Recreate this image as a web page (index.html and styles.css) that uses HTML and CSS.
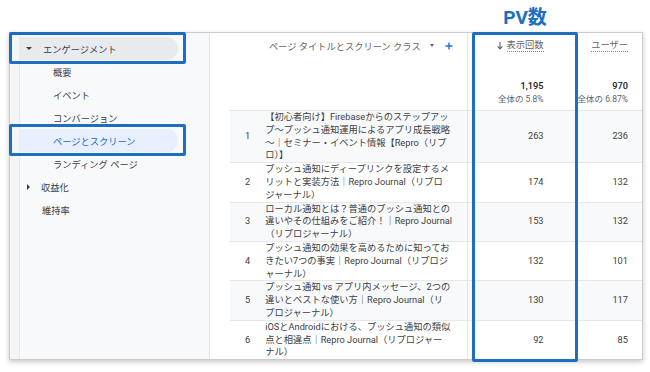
FILE: index.html
```html
<!DOCTYPE html>
<html lang="ja">
<head>
    <meta charset="UTF-8">
    <title>ページとスクリーン</title>
    <link rel="stylesheet" href="styles.css">
</head>
<body>
    <div class="shot">
        <div class="panel">
            <aside class="sidebar">
                <div class="nav-item nav-group open"><span class="caret caret-down"></span>エンゲージメント</div>
                <div class="nav-item sub">概要</div>
                <div class="nav-item sub">イベント</div>
                <div class="nav-item sub">コンバージョン</div>
                <div class="nav-item sub active">ページとスクリーン</div>
                <div class="nav-item sub">ランディング ページ</div>
                <div class="nav-item nav-group"><span class="caret caret-right"></span>収益化</div>
                <div class="nav-item">維持率</div>
            </aside>

            <main class="report">
                <table class="data">
                    <colgroup>
                        <col class="c-num">
                        <col class="c-title">
                        <col class="c-pv">
                        <col class="c-user">
                    </colgroup>
                    <thead>
                        <tr>
                            <th colspan="2">
                                <div class="dim-head">
                                    <span>ページ タイトルとスクリーン クラス</span>
                                    <span class="head-caret"></span>
                                    <svg class="plus" width="8" height="8" viewBox="0 0 8 8"><path d="M4 0.5v7M0.5 4h7" stroke="#1a73e8" stroke-width="1.4"/></svg>
                                </div>
                            </th>
                            <th class="metric split">
                                <div class="metric-head">
                                    <svg class="arrow" width="6" height="8" viewBox="0 0 6 8"><path d="M3 0v6.5M0.6 4.4L3 6.9l2.4-2.5" stroke="#5f6368" stroke-width="1.1" fill="none"/></svg>
                                    <span class="dotted">表示回数</span>
                                </div>
                                <div class="total">1,195</div>
                                <div class="share">全体の 5.8%</div>
                            </th>
                            <th class="metric">
                                <div class="metric-head"><span class="dotted">ユーザー</span></div>
                                <div class="total">970</div>
                                <div class="share">全体の 6.87%</div>
                            </th>
                        </tr>
                    </thead>
                    <tbody>
                        <tr>
                            <td class="num">1</td>
                            <td class="title">【初心者向け】Firebaseからのステップアッ<br>プ～プッシュ通知運用によるアプリ成長戦略<br>～｜セミナー・イベント情報【Repro（リプ<br>ロ）】</td>
                            <td class="metric split">263</td>
                            <td class="metric">236</td>
                        </tr>
                        <tr>
                            <td class="num">2</td>
                            <td class="title">プッシュ通知にディープリンクを設定するメ<br>リットと実装方法｜Repro Journal（リプロ<br>ジャーナル）</td>
                            <td class="metric split">174</td>
                            <td class="metric">132</td>
                        </tr>
                        <tr>
                            <td class="num">3</td>
                            <td class="title">ローカル通知とは？普通のプッシュ通知との<br>違いやその仕組みをご紹介！｜Repro Journal<br>（リプロジャーナル）</td>
                            <td class="metric split">153</td>
                            <td class="metric">132</td>
                        </tr>
                        <tr>
                            <td class="num">4</td>
                            <td class="title">プッシュ通知の効果を高めるために知ってお<br>きたい7つの事実｜Repro Journal（リプロジ<br>ャーナル）</td>
                            <td class="metric split">132</td>
                            <td class="metric">101</td>
                        </tr>
                        <tr>
                            <td class="num">5</td>
                            <td class="title">プッシュ通知 vs アプリ内メッセージ、2つの<br>違いとベストな使い方｜Repro Journal（リ<br>プロジャーナル）</td>
                            <td class="metric split">130</td>
                            <td class="metric">117</td>
                        </tr>
                        <tr>
                            <td class="num">6</td>
                            <td class="title">iOSとAndroidにおける、プッシュ通知の類似<br>点と相違点｜Repro Journal（リプロジャー<br>ナル）</td>
                            <td class="metric split">92</td>
                            <td class="metric">85</td>
                        </tr>
                    </tbody>
                </table>
            </main>
        </div>

        <div class="mark mark-engage"></div>
        <div class="mark mark-pages"></div>
        <div class="mark mark-pv"><span class="mark-label">PV数</span></div>
    </div>
</body>
</html>
```

FILE: styles.css
```css
body {
    margin: 0;
    background: #fff;
    font-family: Roboto, "Noto Sans CJK JP", sans-serif;
    color: #3c4043;
}
.shot {
    position: relative;
    width: 650px;
    height: 372px;
    padding: 32px 0 0 9px;
    box-sizing: border-box;
}
.panel {
    display: flex;
    width: 632px;
    border: 1px solid #c9cbcf;
    background: #fff;
    box-shadow: 0 2px 5px rgba(0, 0, 0, 0.22);
}

/* sidebar */
.sidebar {
    width: 200px;
    box-sizing: border-box;
    padding-top: 4px;
    background: #f8f9fa;
    border-left: 9px solid #f4f5f6;
    border-right: 1px solid #e3e5e8;
    box-shadow: inset 1px 0 #e8eaed;
    font-size: 9.25px;
}
.nav-item {
    display: flex;
    align-items: center;
    height: 23px;
    margin-right: 31px;
    padding-left: 23px;
    border-radius: 0 12px 12px 0;
    white-space: nowrap;
}
.nav-item.sub {
    padding-left: 34px;
}
.nav-item.nav-group {
    padding-left: 7px;
}
.nav-item.open {
    background: #e8eaed;
}
.nav-item.active {
    background: #e8f0fe;
    color: #1967d2;
}
.caret {
    width: 0;
    height: 0;
    margin-right: 11px;
}
.caret-down {
    border-left: 3px solid transparent;
    border-right: 3px solid transparent;
    border-top: 3.5px solid #3c4043;
}
.caret-right {
    margin-left: 1px;
    border-top: 3px solid transparent;
    border-bottom: 3px solid transparent;
    border-left: 3.5px solid #3c4043;
}

/* table */
.report {
    flex: 1;
    padding-left: 20px;
}
.data {
    width: 100%;
    border-collapse: collapse;
    table-layout: fixed;
    font-size: 9.25px;
}
.c-num { width: 35px; }
.c-title { width: 201px; }
.c-pv { width: 90px; }
.c-user { width: 84px; }

.data th {
    height: 77px;
    padding: 0;
    vertical-align: top;
    font-weight: normal;
    color: #5f6368;
    border-bottom: 1px solid #e3e5e8;
}
.dim-head {
    display: flex;
    justify-content: flex-end;
    align-items: center;
    gap: 7px;
    height: 13px;
    margin-top: 6px;
    padding-right: 14px;
    white-space: nowrap;
}
.head-caret {
    width: 0;
    height: 0;
    margin-left: 2px;
    margin-right: 4px;
    border-left: 2.5px solid transparent;
    border-right: 2.5px solid transparent;
    border-top: 3px solid #5f6368;
}
.metric-head {
    display: flex;
    justify-content: flex-end;
    align-items: center;
    gap: 4px;
    height: 13px;
    margin-top: 6px;
}
.dotted {
    line-height: 12px;
    border-bottom: 1px dotted #80868b;
}
.total {
    margin-top: 27px;
    line-height: 13px;
    font-weight: 500;
    color: #202124;
}
.share {
    margin-top: 1px;
    line-height: 12px;
    font-size: 8.5px;
}

.data td {
    padding: 0;
    line-height: 12.8px;
    border-bottom: 1px solid #e6e7e9;
    vertical-align: middle;
}
.data tbody tr:nth-child(odd) {
    background: #f8f9fa;
}
.data tbody tr:last-child td {
    border-bottom: none;
}
.num {
    text-align: center;
}
.title {
    white-space: nowrap;
    overflow: hidden;
}
.metric {
    text-align: right;
    padding-right: 14px !important;
}
.split {
    border-left: 1px solid #e3e5e8;
}

/* annotations */
.mark {
    position: absolute;
    box-sizing: border-box;
    border: 3px solid #1c6fc0;
    border-radius: 2px;
}
.mark-engage {
    left: 9px;
    top: 32px;
    width: 177px;
    height: 32px;
}
.mark-pages {
    left: 9px;
    top: 124px;
    width: 177px;
    height: 32px;
}
.mark-pv {
    left: 472px;
    top: 32px;
    width: 106px;
    height: 330px;
}
.mark-label {
    position: absolute;
    left: 0;
    right: 0;
    top: -28px;
    text-align: center;
    font-size: 19px;
    line-height: 22px;
    font-weight: bold;
    color: #1c6fc0;
}
```
